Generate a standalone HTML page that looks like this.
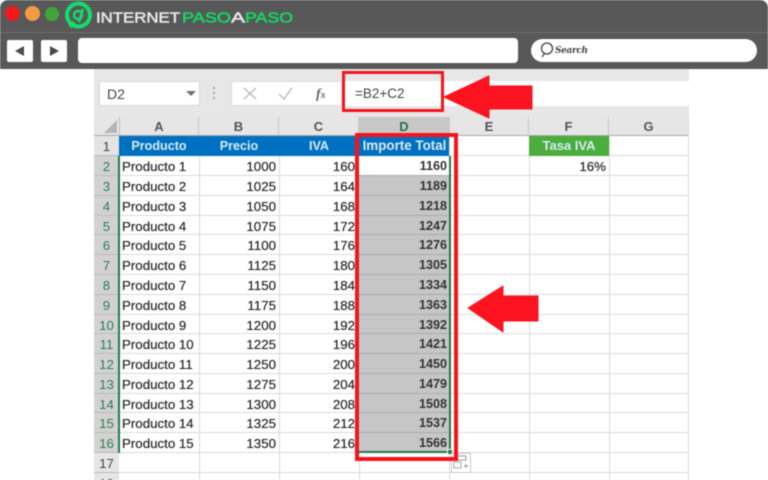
<!DOCTYPE html>
<html><head><meta charset="utf-8"><style>
html,body{margin:0;padding:0;background:#fff;width:768px;height:480px;overflow:hidden}
body{position:relative;font-family:"Liberation Sans",sans-serif}
div{position:absolute;box-sizing:border-box}
#w{left:0;top:0;width:768px;height:480px;filter:blur(.4px);overflow:hidden}
#x{left:94px;top:69px;width:595px;height:411px;background:#e7e7e7;overflow:hidden}
.r{left:94px;width:595px;height:20px;background:#fff;border-bottom:1px solid #dadada;font-size:13.3px;line-height:21px;color:#2c2c2c;text-shadow:0 0 .5px #2c2c2c}
.r div{top:0;height:19px;white-space:nowrap}
.r .n,.r .d{height:calc(100% + 1px)}
.n{left:0;width:25px;background:#d2d2d2;color:#2a7d55;text-align:center;border-bottom:1px solid #bbb;text-shadow:none}
.a{left:28px}
.b{left:106px;width:76px;text-align:right}
.c{left:185px;width:76px;text-align:right}
.d{left:265px;width:90px;background:#c6c6c6;padding-right:2px;text-align:right;font-weight:bold;font-size:12.6px;color:#333;text-shadow:none;border-bottom:1px solid #aaa}
.v{top:117px;width:1px;height:363px;background:#dadada}
.ch{top:117px;height:19px;background:#e6e6e6;border-bottom:1px solid #a8a8a8;border-right:1px solid #c8c8c8;font-size:13px;font-weight:bold;line-height:19px;text-align:center;color:#555}
.h{top:136px;height:20px;color:#d8ecf8;font-weight:bold;font-size:12.6px;line-height:20px;text-align:center}
</style></head><body><div id="w">
<div style="left:0;top:0;width:768px;height:69px;background:#585858;border-radius:8px 8px 0 0"></div>
<div style="left:0;top:32px;width:768px;height:1px;background:#6e6e6e"></div>
<div style="left:5px;top:6px;width:15px;height:15px;border-radius:50%;background:#f0191e"></div>
<div style="left:25px;top:6px;width:15px;height:15px;border-radius:50%;background:#f49b42"></div>
<div style="left:45px;top:7px;width:14px;height:14px;border-radius:50%;background:#3fa63a"></div>
<svg style="position:absolute;left:0;top:0" width="300" height="32">
<circle cx="78.500" cy="15" r="11.500" fill="none" stroke="#0fdf6c" stroke-width="4"/>
<path d="M70 27 L74 22" stroke="#0fdf6c" stroke-width="4" fill="none"/>
<circle cx="78" cy="15" r="4" fill="none" stroke="#0fdf6c" stroke-width="2.500"/>
<path d="M83 9 L79 22" stroke="#0fdf6c" stroke-width="2.500" fill="none"/>
<g font-family="Liberation Sans" font-size="14.500" stroke-width=".5">
<text x="96" y="22.500" fill="#e8e8e8" stroke="#e8e8e8" textLength="84" lengthAdjust="spacingAndGlyphs">INTERNET</text>
<text x="182" y="22.500" fill="#13d868" stroke="#13d868" textLength="49" lengthAdjust="spacingAndGlyphs">PASO</text>
<text x="231" y="22.500" fill="#e8e8e8" stroke="#e8e8e8" textLength="14" lengthAdjust="spacingAndGlyphs">A</text>
<text x="245" y="22.500" fill="#13d868" stroke="#13d868" textLength="48" lengthAdjust="spacingAndGlyphs">PASO</text>
</g>
</svg>
<div style="left:7px;top:40px;width:26px;height:22px;background:#fff;border-radius:2px"></div>
<div style="left:41px;top:40px;width:26px;height:22px;background:#fff;border-radius:2px"></div>
<svg style="position:absolute;left:0;top:38px" width="80" height="26">
<path d="M15 13 L24 8 V18 Z" fill="#4a4a4a"/><path d="M59 13 L50 8 V18 Z" fill="#4a4a4a"/></svg>
<div style="left:78px;top:38px;width:440px;height:25px;background:#fff;border-radius:4px"></div>
<div style="left:531px;top:39px;width:226px;height:23px;background:#fff;border-radius:12px"></div>
<svg style="position:absolute;left:535px;top:40px" width="60" height="20">
<circle cx="12" cy="8.500" r="5.500" fill="none" stroke="#444" stroke-width="1.300"/>
<path d="M9 14 L7 17" stroke="#444" stroke-width="1.300"/>
<text x="20" y="13" font-family="DejaVu Serif" font-style="italic" font-weight="bold" font-size="9" fill="#444" textLength="33">Search</text>
</svg>

<div id="x"></div>
<div style="left:99px;top:81px;width:101px;height:25px;background:#fff;border:1px solid #d8d8d8;font-size:14px;line-height:24px;color:#444;padding-left:7px">D2</div>
<svg style="position:absolute;left:185px;top:90px" width="14" height="8"><path d="M1 1 H11 L6 6 Z" fill="#707070"/></svg>
<svg style="position:absolute;left:212px;top:86px" width="6" height="16"><g fill="#a5a5a5"><rect x="1" y="1" width="2" height="2"/><rect x="1" y="6" width="2" height="2"/><rect x="1" y="11" width="2" height="2"/></g></svg>
<div style="left:231px;top:81px;width:111px;height:25px;background:#fff;border:1px solid #dcdcdc"></div>
<svg style="position:absolute;left:231px;top:81px" width="111" height="25">
<path d="M13 7 L25 18 M25 7 L13 18" stroke="#bdbdbd" stroke-width="1.500"/>
<path d="M48 13 L53 18 L61 7" stroke="#bdbdbd" stroke-width="1.500" fill="none"/>
<text x="85" y="17" font-family="Liberation Serif" font-style="italic" font-weight="bold" font-size="14" fill="#666">f<tspan font-size="10">x</tspan></text>
</svg>
<div style="left:342px;top:81px;width:347px;height:25px;background:#fff;font-size:13.500px;line-height:26px;color:#444;padding-left:13px">=B2+C2</div>

<div style="left:94px;top:117px;width:26px;height:19px;background:#e6e6e6;border-bottom:1px solid #a8a8a8;border-right:1px solid #c0c0c0"></div>
<svg style="position:absolute;left:103px;top:120px" width="16" height="15"><path d="M14 0 V13 H1 Z" fill="#b5b5b5"/></svg>
<div class="ch" style="left:120px;width:79px">A</div>
<div class="ch" style="left:199px;width:80px">B</div>
<div class="ch" style="left:279px;width:80px">C</div>
<div class="ch" style="left:359px;width:91px;background:#c8c8c8;color:#217346">D</div>
<div class="ch" style="left:450px;width:79px">E</div>
<div class="ch" style="left:529px;width:80px">F</div>
<div class="ch" style="left:609px;width:80px">G</div>

<div class="r" style="top:136px"><div class="n" style="background:#e4e4e4;color:#444">1</div></div>
<div class="h" style="left:119px;width:331px;background:#0070c0"></div>
<div class="h" style="left:119px;width:80px">Producto</div>
<div class="h" style="left:199px;width:80px">Precio</div>
<div class="h" style="left:279px;width:80px">IVA</div>
<div class="h" style="left:359px;width:91px;font-size:13.400px">Importe Total</div>
<div class="h" style="left:529px;width:80px;background:#4aad3c;font-size:13px">Tasa IVA</div>

<div class="r" style="top:156px"><div class="n">2</div><div class="a">Producto 1</div><div class="b">1000</div><div class="c">160</div><div class="d" style="background:#fff">1160</div><div style="left:435px;width:77px;text-align:right">16%</div></div>
<div class="r" style="top:176px"><div class="n">3</div><div class="a">Producto 2</div><div class="b">1025</div><div class="c">164</div><div class="d">1189</div></div>
<div class="r" style="top:196px"><div class="n">4</div><div class="a">Producto 3</div><div class="b">1050</div><div class="c">168</div><div class="d">1218</div></div>
<div class="r" style="top:216px;height:19px"><div class="n">5</div><div class="a">Producto 4</div><div class="b">1075</div><div class="c">172</div><div class="d">1247</div></div>
<div class="r" style="top:235px"><div class="n">6</div><div class="a">Producto 5</div><div class="b">1100</div><div class="c">176</div><div class="d">1276</div></div>
<div class="r" style="top:255px"><div class="n">7</div><div class="a">Producto 6</div><div class="b">1125</div><div class="c">180</div><div class="d">1305</div></div>
<div class="r" style="top:275px"><div class="n">8</div><div class="a">Producto 7</div><div class="b">1150</div><div class="c">184</div><div class="d">1334</div></div>
<div class="r" style="top:295px"><div class="n">9</div><div class="a">Producto 8</div><div class="b">1175</div><div class="c">188</div><div class="d">1363</div></div>
<div class="r" style="top:315px;height:19px"><div class="n">10</div><div class="a">Producto 9</div><div class="b">1200</div><div class="c">192</div><div class="d">1392</div></div>
<div class="r" style="top:334px"><div class="n">11</div><div class="a">Producto 10</div><div class="b">1225</div><div class="c">196</div><div class="d">1421</div></div>
<div class="r" style="top:354px"><div class="n">12</div><div class="a">Producto 11</div><div class="b">1250</div><div class="c">200</div><div class="d">1450</div></div>
<div class="r" style="top:374px"><div class="n">13</div><div class="a">Producto 12</div><div class="b">1275</div><div class="c">204</div><div class="d">1479</div></div>
<div class="r" style="top:394px;height:19px"><div class="n">14</div><div class="a">Producto 13</div><div class="b">1300</div><div class="c">208</div><div class="d">1508</div></div>
<div class="r" style="top:413px"><div class="n">15</div><div class="a">Producto 14</div><div class="b">1325</div><div class="c">212</div><div class="d">1537</div></div>
<div class="r" style="top:433px"><div class="n">16</div><div class="a">Producto 15</div><div class="b">1350</div><div class="c">216</div><div class="d">1566</div></div>
<div class="r" style="top:453px"><div class="n" style="background:#e6e6e6;color:#444">17</div></div>
<div class="r" style="top:473px"><div class="n" style="background:#e6e6e6;color:#444">18</div></div>

<div class="v" style="left:199px;top:156px;height:324px"></div>
<div class="v" style="left:279px;top:156px;height:324px"></div>
<div class="v" style="left:359px;top:453px;height:27px"></div>
<div class="v" style="left:449px;top:136px;height:344px"></div>
<div class="v" style="left:529px;top:156px;height:324px"></div>
<div class="v" style="left:609px;top:136px;height:344px"></div>
<div class="v" style="left:688px;top:117px;height:363px"></div>

<div style="left:118px;top:156px;width:2px;height:297px;background:#1f7a4e"></div>
<div style="left:449px;top:156px;width:2px;height:297px;background:#1f7a4e"></div>
<div style="left:359px;top:451px;width:92px;height:2px;background:#1f7a4e"></div>
<div style="left:447px;top:449px;width:6px;height:6px;background:#1f7a4e;border:1px solid #fff"></div>

<div style="left:451px;top:453px;width:20px;height:20px;background:#fff;border:1px solid #c8c8c8"></div>
<svg style="position:absolute;left:453px;top:455px" width="16" height="16"><rect x="1" y="1" width="3" height="3" fill="#3a7bd5"/><rect x="4" y="1" width="9" height="4" fill="none" stroke="#999"/><rect x="1" y="7" width="7" height="6" fill="none" stroke="#aaa"/><path d="M11 11 H15 M13 9 V13" stroke="#999"/></svg>

<div style="left:342px;top:71px;width:102px;height:41px;border:3px solid #f5141e"></div>
<div style="left:355px;top:133px;width:103px;height:328px;border:4px solid #f5141e"></div>
<svg style="position:absolute;left:0;top:0" width="768" height="480">
<path d="M444 97 L489 76 V86 H532 V109 H489 V118 Z" fill="#fb1420" stroke="#fb1420" stroke-linejoin="round"/>
<path d="M468 308 L503 286 V296 H538 V321 H503 V332 Z" fill="#fb1420" stroke="#fb1420" stroke-linejoin="round"/>
</svg>
</div></body></html>
